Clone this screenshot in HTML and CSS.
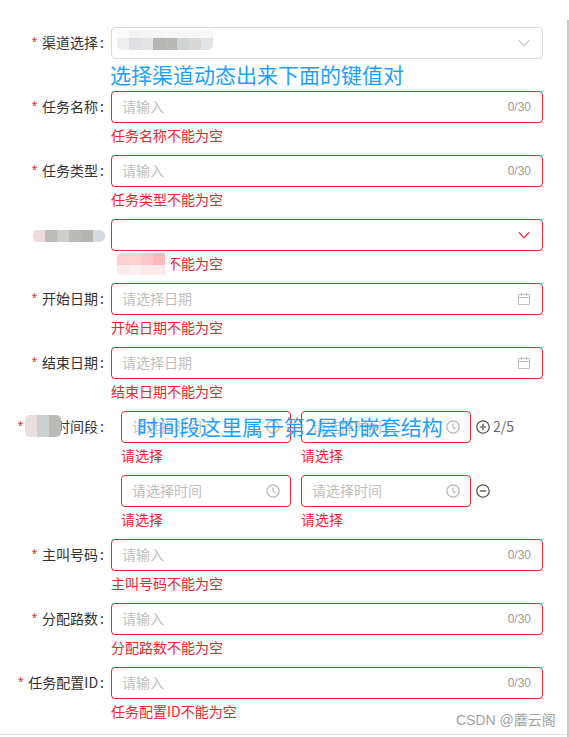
FILE: index.html
```html
<!DOCTYPE html>
<html lang="zh-CN">
<head>
    <meta charset="UTF-8">
    <title>任务配置</title>
    <link rel="stylesheet" href="styles.css">
</head>
<body>
    <div class="page">
        <form class="form">
            <div class="form-item">
                <label class="form-label"><span class="star">*</span>渠道选择<span class="colon">:</span></label>
                <div class="form-control">
                    <div class="input input-plain">
                        <span class="mosaic mosaic-value"></span>
                        <svg class="icon chevron" viewBox="0 0 12 12"><path d="M1.5 3.5 6 8.5l4.5-5"/></svg>
                    </div>
                    <div class="note">选择渠道动态出来下面的键值对</div>
                </div>
            </div>
            <div class="form-item">
                <label class="form-label"><span class="star">*</span>任务名称<span class="colon">:</span></label>
                <div class="form-control">
                    <div class="input"><span class="placeholder">请输入</span><span class="count">0/30</span></div>
                    <div class="error">任务名称不能为空</div>
                </div>
            </div>
            <div class="form-item">
                <label class="form-label"><span class="star">*</span>任务类型<span class="colon">:</span></label>
                <div class="form-control">
                    <div class="input"><span class="placeholder">请输入</span><span class="count">0/30</span></div>
                    <div class="error">任务类型不能为空</div>
                </div>
            </div>
            <div class="form-item">
                <label class="form-label"><span class="mosaic mosaic-label"></span></label>
                <div class="form-control">
                    <div class="input">
                        <svg class="icon chevron chevron-error" viewBox="0 0 12 12"><path d="M1.5 3.5 6 8.5l4.5-5"/></svg>
                    </div>
                    <div class="error error-masked"><span class="mosaic mosaic-error"></span>不能为空</div>
                </div>
            </div>
            <div class="form-item">
                <label class="form-label"><span class="star">*</span>开始日期<span class="colon">:</span></label>
                <div class="form-control">
                    <div class="input">
                        <span class="placeholder">请选择日期</span>
                        <svg class="icon calendar" viewBox="0 0 14 14"><path d="M1.5 2.5h11v10h-11zM1.5 5.5h11M4.5 1v3M9.5 1v3"/></svg>
                    </div>
                    <div class="error">开始日期不能为空</div>
                </div>
            </div>
            <div class="form-item">
                <label class="form-label"><span class="star">*</span>结束日期<span class="colon">:</span></label>
                <div class="form-control">
                    <div class="input">
                        <span class="placeholder">请选择日期</span>
                        <svg class="icon calendar" viewBox="0 0 14 14"><path d="M1.5 2.5h11v10h-11zM1.5 5.5h11M4.5 1v3M9.5 1v3"/></svg>
                    </div>
                    <div class="error">结束日期不能为空</div>
                </div>
            </div>
            <div class="form-item form-item-nested">
                <label class="form-label"><span class="star star-tight">*</span><span class="mosaic mosaic-time"></span>时间段<span class="colon">:</span></label>
                <div class="form-control">
                    <div class="time-row">
                        <div class="time-col">
                            <div class="input"><span class="placeholder">请选择时间</span>
                                <svg class="icon clock" viewBox="0 0 14 14"><circle cx="7" cy="7" r="6.1"/><path d="M7 3.5V7l2.5 2"/></svg>
                            </div>
                            <div class="error">请选择</div>
                        </div>
                        <div class="time-col">
                            <div class="input"><span class="placeholder">请选择时间</span>
                                <svg class="icon clock" viewBox="0 0 14 14"><circle cx="7" cy="7" r="6.1"/><path d="M7 3.5V7l2.5 2"/></svg>
                            </div>
                            <div class="error">请选择</div>
                        </div>
                        <div class="time-action">
                            <svg class="icon-round" viewBox="0 0 14 14"><circle cx="7" cy="7" r="6.2"/><path class="fat" d="M3.8 7h6.4M7 3.8v6.4"/></svg>
                            <span class="time-count">2/5</span>
                        </div>
                    </div>
                    <div class="time-row">
                        <div class="time-col">
                            <div class="input"><span class="placeholder">请选择时间</span>
                                <svg class="icon clock" viewBox="0 0 14 14"><circle cx="7" cy="7" r="6.1"/><path d="M7 3.5V7l2.5 2"/></svg>
                            </div>
                            <div class="error">请选择</div>
                        </div>
                        <div class="time-col">
                            <div class="input"><span class="placeholder">请选择时间</span>
                                <svg class="icon clock" viewBox="0 0 14 14"><circle cx="7" cy="7" r="6.1"/><path d="M7 3.5V7l2.5 2"/></svg>
                            </div>
                            <div class="error">请选择</div>
                        </div>
                        <div class="time-action">
                            <svg class="icon-round" viewBox="0 0 14 14"><circle cx="7" cy="7" r="6.2"/><path class="fat" d="M3.8 7h6.4"/></svg>
                        </div>
                    </div>
                    <div class="note note-over">时间段这里属于第2层的嵌套结构</div>
                </div>
            </div>
            <div class="form-item">
                <label class="form-label"><span class="star">*</span>主叫号码<span class="colon">:</span></label>
                <div class="form-control">
                    <div class="input"><span class="placeholder">请输入</span><span class="count">0/30</span></div>
                    <div class="error">主叫号码不能为空</div>
                </div>
            </div>
            <div class="form-item">
                <label class="form-label"><span class="star">*</span>分配路数<span class="colon">:</span></label>
                <div class="form-control">
                    <div class="input"><span class="placeholder">请输入</span><span class="count">0/30</span></div>
                    <div class="error">分配路数不能为空</div>
                </div>
            </div>
            <div class="form-item">
                <label class="form-label"><span class="star">*</span>任务配置ID<span class="colon">:</span></label>
                <div class="form-control">
                    <div class="input"><span class="placeholder">请输入</span><span class="count">0/30</span></div>
                    <div class="error">任务配置ID不能为空</div>
                </div>
            </div>
        </form>
        <div class="watermark">CSDN @蘑云阁</div>
    </div>
</body>
</html>
```
FILE: styles.css
```css
html, body { margin: 0; padding: 0; background-color: #fff; }
body { font-family: "Noto Sans CJK SC", "Noto Sans", sans-serif; font-size: 14px; color: #333; overflow: hidden; }
.page { position: relative; width: 569px; height: 737px; overflow: hidden; }
.page::before { content: ""; position: absolute; left: 0; right: 2px; top: 734px; height: 1px; background-color: #e4e4e4; }
.page::after { content: ""; position: absolute; right: 0; top: 20px; bottom: 0; width: 2px; background-color: #ccc; }
.form { padding-top: 27px; }
.form-item { display: grid; grid-template-columns: 111px 432px; height: 64px; }
.form-item-nested { height: 128px; }
.form-label { display: flex; justify-content: flex-end; align-items: center; height: 32px; padding: 0 7px 2px 0; box-sizing: border-box; white-space: nowrap; }
.colon { margin-left: 2px; }
.star { color: #f5222d; margin-right: 5px; font-family: "Liberation Sans", sans-serif; }
.star-tight { margin-right: 2px; }
.form-control { position: relative; }
.input { display: flex; align-items: center; justify-content: space-between; height: 32px; padding: 0 11px 0 10px; box-sizing: border-box; border: 1px solid #f5222d; border-radius: 4px; background-color: #fff; }
.input-plain { border-color: #d9d9d9; padding-left: 5px; }
.placeholder { color: #bfbfbf; padding-bottom: 2px; }
.count { color: #999; font-size: 12px; font-family: "Liberation Sans", sans-serif; }
.error { color: #f5222d; line-height: 20px; height: 32px; padding-top: 2px; box-sizing: border-box; white-space: nowrap; }
.error-masked { display: flex; align-items: flex-start; }
.note { color: #1e9fff; font-size: 21px; line-height: 30px; margin-left: -1px; white-space: nowrap; }
.note-over { position: absolute; left: 26px; top: 0; margin: 0; }
.icon { width: 14px; height: 14px; fill: none; stroke: #bfbfbf; stroke-width: 1; flex: none; margin-left: auto; }
.chevron { stroke: #c4c4c4; }
.chevron-error { stroke: #f5222d; }
.clock { stroke-width: 1.5; margin-right: -1px; }
.time-row { display: flex; gap: 10px; height: 64px; padding-left: 10px; }
.time-col { width: 170px; }
.time-action { display: flex; align-items: center; height: 32px; margin-left: -5px; color: #666; }
.icon-round { width: 14px; height: 14px; fill: none; stroke: #555; stroke-width: 1.3; }
.icon-round .fat { stroke: #777; stroke-width: 1.7; }
.time-count { margin-left: 3px; font-size: 14px; padding-bottom: 2px; }
.mosaic { display: block; flex: none; border-radius: 5px; }
.mosaic-value { width: 96px; height: 20px; margin-bottom: 6px; background:
    linear-gradient(to right, #fbfbfb 0 12px, #f3f3f3 12px 24px, #f5f5f5 24px 48px, #f7f7f7 48px 96px) 0 0 / 96px 8px no-repeat,
    linear-gradient(to right, #eee 0 12px, #e0dfe4 12px 24px, #e4e3e5 24px 36px, #b5b5b3 36px 48px, #bbb9b3 48px 60px, #d0d3d3 60px 72px, #d9d8d5 72px 84px, #e1e4e6 84px 96px) 0 8px / 96px 12px no-repeat; }
.mosaic-label { width: 72px; height: 12px; margin: 4px -1px 0 0; background: linear-gradient(to right, #eedcdc 0 12px, #bdbcb8 12px 24px, #cfcfca 24px 36px, #bbbab6 36px 48px, #b5b4af 48px 60px, #d5dcdf 60px 72px); }
.mosaic-time { position: relative; width: 36px; height: 22px; margin-right: -5px; background: linear-gradient(to right, #eadfdf 0 12px, #cbd0d2 12px 24px, #bbbab6 24px 36px); }
.mosaic-error { position: relative; width: 54px; height: 22px; margin: 0 -4px 0 6px; background:
    linear-gradient(to right, #fccfd0 0 12px, #fcd3d3 12px 24px, #fcc8cc 24px 36px, #fdb9bc 36px 48px, #fff5f5 48px 54px) 0 0 / 54px 12px no-repeat,
    linear-gradient(to right, #fdeaea 0 12px, #fef0f0 12px 24px, #fde9ea 24px 48px, #fff 48px 54px) 0 12px / 54px 10px no-repeat; }
.watermark { position: absolute; left: 456px; top: 710px; color: #a3a3a3; font-family: "Liberation Sans", "Noto Sans CJK SC", sans-serif; font-size: 14px; line-height: 20px; white-space: nowrap; }
```
